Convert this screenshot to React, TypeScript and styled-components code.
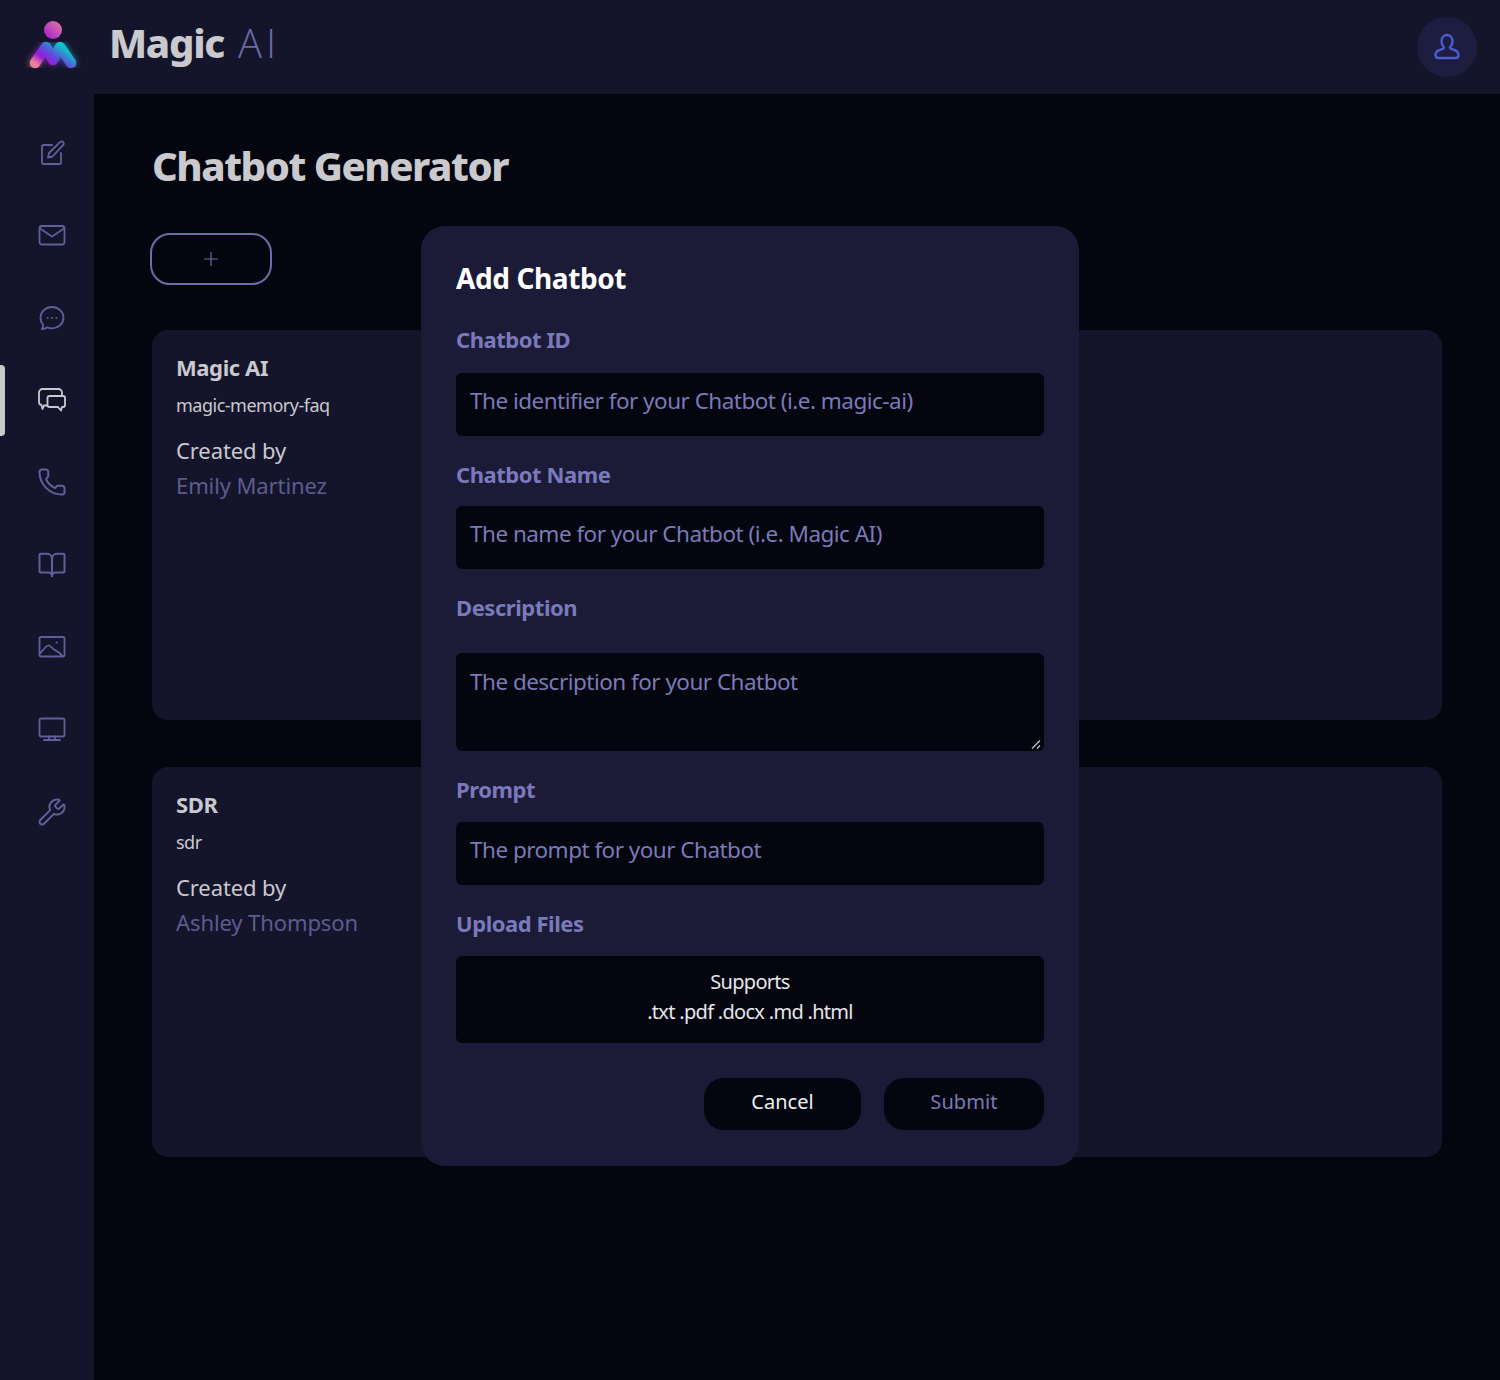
import React from "react";
import styled, { createGlobalStyle } from "styled-components";
import { Phone, BookOpen, Wrench, Plus } from "lucide-react";

const Global = createGlobalStyle`
  html, body { margin: 0; padding: 0; background: #05050f; }
  * { box-sizing: border-box; }
  body { font-family: "Noto Sans", "Open Sans", sans-serif; }
`;

const Page = styled.div`
  position: relative;
  width: 1500px;
  height: 1380px;
  background: #05050f;
  overflow: hidden;
  display: flex;
  flex-direction: column;
`;
const Header = styled.header`
  height: 94px;
  flex: none;
  background: #14152b;
  display: flex;
  align-items: center;
  padding: 0 23px 0 25px;
`;
const LogoBox = styled.div`
  width: 56px;
  height: 64px;
  margin-right: 28px;
  margin-top: -4px;
`;
const Brand = styled.div`
  font-size: 40px;
  line-height: 48px;
  font-weight: 800;
  color: #c9c9ce;
  letter-spacing: -1.3px;
  flex: 1;
  margin-top: -8px;
`;
const BrandLight = styled.span`
  font-family: "Open Sans", sans-serif;
  font-weight: 300;
  color: #6a6aa6;
  letter-spacing: 4px;
  margin-left: 14px;
`;
const Avatar = styled.div`
  width: 60px;
  height: 60px;
  border-radius: 50%;
  background: #1c1d3f;
  display: flex;
  align-items: center;
  justify-content: center;
  color: #4d5bd0;
`;
const Body = styled.div`
  flex: 1;
  display: flex;
`;
const Sidebar = styled.nav`
  width: 94px;
  flex: none;
  background: #14152b;
  padding: 18px 0 0 10px;
`;
const NavItem = styled.div<{ $active?: boolean }>`
  height: 82.33px;
  display: flex;
  align-items: center;
  justify-content: center;
  color: ${(p) => (p.$active ? "#c9c9ce" : "#5f5f9b")};
  ${(p) =>
    p.$active &&
    `&::before {
      content: "";
      position: absolute;
      left: 0;
      margin-top: 1px;
      width: 5px;
      height: 71px;
      background: #c9c9ce;
      border-radius: 0 4px 4px 0;
    }`}
`;
const Main = styled.main`
  flex: 1;
  padding: 45px 58px 0 58px;
`;
const Title = styled.h1`
  margin: 0 0 40px 0;
  font-size: 40px;
  line-height: 54px;
  font-weight: 800;
  letter-spacing: -1.45px;
  color: #c9c9ce;
`;
const AddButton = styled.button`
  width: 122px;
  height: 52px;
  margin: 0 0 45px -2px;
  display: flex;
  align-items: center;
  justify-content: center;
  background: transparent;
  border: 2px solid #6c6ca6;
  border-radius: 20px;
  color: #6c6ca6;
  padding: 0;
`;
const Cards = styled.div`
  display: flex;
  flex-direction: column;
  gap: 47.5px;
`;
const Card = styled.article`
  height: 389.5px;
  border-radius: 16px;
  background: #14152b;
  padding: 21px 24px;
`;
const CardName = styled.div`
  font-size: 22px;
  line-height: 32px;
  font-weight: 700;
  letter-spacing: -0.4px;
  color: #c9c9ce;
`;
const CardId = styled.div`
  font-size: 18px;
  line-height: 26px;
  margin-top: 9px;
  letter-spacing: -0.5px;
  color: #c9c9ce;
`;
const CreatedLabel = styled.div`
  font-size: 22px;
  line-height: 32px;
  margin-top: 16px;
  letter-spacing: -0.1px;
  color: #c9c9ce;
`;
const CreatedName = styled.div`
  font-size: 22px;
  line-height: 32px;
  margin-top: 3px;
  letter-spacing: -0.1px;
  color: #5c5c90;
`;
const Modal = styled.section`
  position: absolute;
  left: 421px;
  top: 226px;
  width: 658px;
  height: 940px;
  background: #1b1b38;
  border-radius: 24px;
  padding: 32px 35px 35px 35px;
  display: flex;
  flex-direction: column;
`;
const ModalTitle = styled.h2`
  margin: 0 0 28px;
  font-size: 28px;
  line-height: 40px;
  font-weight: 700;
  letter-spacing: -0.4px;
  color: #fff;
`;
const Field = styled.div`
  margin-bottom: 25px;
`;
const Label = styled.label<{ $gap?: number }>`
  display: block;
  font-size: 22px;
  line-height: 26px;
  font-weight: 700;
  letter-spacing: -0.45px;
  color: #7a7abb;
  margin-bottom: ${(p) => p.$gap ?? 20}px;
`;
const TextInput = styled.input`
  display: block;
  width: 100%;
  height: 63px;
  border: 0;
  border-radius: 6px;
  background: #05050f;
  padding: 0 14px 8px;
  font: 400 22.5px "Noto Sans", sans-serif;
  letter-spacing: -0.52px;
  color: #7a7ab8;
  outline: none;
  &::placeholder { color: #7a7ab8; opacity: 1; }
`;
const AreaWrap = styled.div`
  position: relative;
`;
const TextArea = styled.textarea`
  display: block;
  width: 100%;
  height: 98px;
  border: 0;
  border-radius: 6px;
  background: #05050f;
  padding: 14px;
  font: 400 22.5px/30px "Noto Sans", sans-serif;
  letter-spacing: -0.52px;
  color: #7a7ab8;
  outline: none;
  resize: none;
  &::placeholder { color: #7a7ab8; opacity: 1; }
`;
const Grip = styled.svg`
  position: absolute;
  right: 2px;
  bottom: 2px;
  pointer-events: none;
`;
const Upload = styled.div`
  height: 87px;
  border-radius: 6px;
  background: #05050f;
  padding-top: 11px;
  text-align: center;
  color: #e6e6ea;
  font-size: 20px;
  line-height: 30px;
  letter-spacing: -0.7px;
`;
const Actions = styled.div`
  display: flex;
  justify-content: flex-end;
  gap: 23px;
  margin-top: 10px;
`;
const ActionButton = styled.button<{ $w: number; $primary?: boolean }>`
  width: ${(p) => p.$w}px;
  height: 52px;
  border: 0;
  border-radius: 20px;
  background: #05050f;
  color: ${(p) => (p.$primary ? "#7a7ab8" : "#f0f0f4")};
  font: 400 20px "Noto Sans", sans-serif;
  letter-spacing: ${(p) => (p.$primary ? "0.1px" : "0")};
  padding: 0 0 6px;
`;

const Icon: React.FC<React.PropsWithChildren> = ({ children }) => (
  <svg width="28" height="28" viewBox="0 0 28 28" fill="none" stroke="currentColor" strokeWidth="1.8" strokeLinecap="round" strokeLinejoin="round">
    {children}
  </svg>
);

const Logo = () => (
  <svg width="56" height="64" viewBox="0 0 56 64">
    <defs>
      <linearGradient id="mg" x1="0" y1="1" x2="1" y2="0.4">
        <stop offset="0" stopColor="#e87f9a" />
        <stop offset="0.3" stopColor="#9a18d8" />
        <stop offset="0.6" stopColor="#5a50dc" />
        <stop offset="1" stopColor="#10c0c8" />
      </linearGradient>
      <linearGradient id="mc" x1="0" y1="1" x2="1" y2="0">
        <stop offset="0" stopColor="#9a18d8" />
        <stop offset="1" stopColor="#e87f9a" />
      </linearGradient>
      <filter id="gl" x="-30%" y="-30%" width="160%" height="160%">
        <feGaussianBlur stdDeviation="3" />
      </filter>
    </defs>
    <path d="M10 50 L21 34 L28 47 L35 34 L46 50" fill="none" stroke="url(#mg)" strokeWidth="11" strokeLinecap="round" strokeLinejoin="round" filter="url(#gl)" opacity="0.7" />
    <path d="M10 50 L21 34 L28 47 L35 34 L46 50" fill="none" stroke="url(#mg)" strokeWidth="10.5" strokeLinecap="round" strokeLinejoin="round" />
    <circle cx="28" cy="17" r="9" fill="url(#mc)" />
  </svg>
);

const items = [
  <Icon key="a">
    <path d="M14 6H5.5A1.5 1.5 0 0 0 4 7.500v16A1.500 1.500 0 0 0 5.500 25h16a1.500 1.500 0 0 0 1.500-1.500V14" />
    <path d="M10 18.500l1-4.500L22.500 2.700a2.200 2.200 0 0 1 3 3L14.500 17.500z" />
  </Icon>,
  <Icon key="b">
    <rect x="1.500" y="5" width="25" height="18.500" rx="2.500" />
    <path d="M2 7.500l12 8 12-8" />
  </Icon>,
  <Icon key="c">
    <path d="M14 3c6.400 0 11.500 4.800 11.500 10.700S20.400 24.300 14 24.300c-1.700 0-3.300-.3-4.800-.9-1.500 1-3.200 1.500-5.400 1.600 1-1.200 1.500-2.400 1.400-4C3.600 19.200 2.500 16.600 2.500 13.700 2.500 7.800 7.600 3 14 3z" />
    <path d="M9.500 13.800h.3M13.900 13.800h.3M18.300 13.800h.3" />
  </Icon>,
  <Icon key="d">
    <path d="M8.500 19.500H6l-1.500 3.500L3.500 19A3 3 0 0 1 1 16V6.500A3.500 3.500 0 0 1 4.500 3h16A3.500 3.500 0 0 1 24 6.500V10" />
    <path d="M12.500 10h12.500a2 2 0 0 1 2 2v7a2 2 0 0 1-2 2h-1l-1 3.500-3-3.500h-8.500a2 2 0 0 1-2-2v-7a2 2 0 0 1 2-2z" />
  </Icon>,
  <Phone key="e" size={30} strokeWidth={1.6} />,
  <BookOpen key="f" size={30} strokeWidth={1.6} />,
  <Icon key="g">
    <rect x="1.500" y="4" width="25" height="19.500" rx="1.500" />
    <path d="M2 20.500C5 17 8 13 10 12.500c2-.5 4 2.500 6 4 3 2 6 2.500 8 6.500" />
    <path d="M18.500 9.500h.3" />
  </Icon>,
  <Icon key="h">
    <rect x="1.500" y="3.500" width="25" height="18" rx="1.500" />
    <path d="M11 21.500v3M17 21.500v3M6 25h16" />
  </Icon>,
  <Wrench key="i" size={30} strokeWidth={1.6} />,
];

export default function App() {
  return (
    <Page>
      <Global />
      <Header>
        <LogoBox><Logo /></LogoBox>
        <Brand>Magic<BrandLight>AI</BrandLight></Brand>
        <Avatar>
          <svg width="30" height="30" viewBox="0 0 30 30" fill="none" stroke="currentColor" strokeWidth="2.400" strokeLinejoin="round">
            <path d="M15 3c3.300 0 5.500 2.500 5.500 6s-1.500 5.500-2.500 6.500c0 1 1 1.500 3 2 3 .8 5.500 2.800 5.500 5.500 0 2-1 3-3 3H6.500c-2 0-3-1-3-3 0-2.700 2.500-4.700 5.500-5.500 2-.5 3-1 3-2-1-1-2.500-3-2.500-6.500S11.700 3 15 3z" />
          </svg>
        </Avatar>
      </Header>
      <Body>
        <Sidebar>
          {items.map((icon, i) => (
            <NavItem key={i} $active={i === 3}>{icon}</NavItem>
          ))}
        </Sidebar>
        <Main>
          <Title>Chatbot Generator</Title>
          <AddButton aria-label="Add"><Plus size={22} strokeWidth={1.3} /></AddButton>
          <Cards>
            <Card>
              <CardName>Magic AI</CardName>
              <CardId>magic-memory-faq</CardId>
              <CreatedLabel>Created by</CreatedLabel>
              <CreatedName>Emily Martinez</CreatedName>
            </Card>
            <Card>
              <CardName>SDR</CardName>
              <CardId>sdr</CardId>
              <CreatedLabel>Created by</CreatedLabel>
              <CreatedName>Ashley Thompson</CreatedName>
            </Card>
          </Cards>
        </Main>
      </Body>
      <Modal>
        <ModalTitle>Add Chatbot</ModalTitle>
        <Field>
          <Label $gap={21}>Chatbot ID</Label>
          <TextInput placeholder="The identifier for your Chatbot (i.e. magic-ai)" />
        </Field>
        <Field>
          <Label $gap={19}>Chatbot Name</Label>
          <TextInput placeholder="The name for your Chatbot (i.e. Magic AI)" />
        </Field>
        <Field>
          <Label $gap={33}>Description</Label>
          <AreaWrap>
            <TextArea placeholder="The description for your Chatbot" />
            <Grip width="12" height="10" viewBox="0 0 12 10" stroke="#c4c4c8" strokeWidth="1.300">
              <path d="M2 9.500L10 1.500M7 9.500L10 6.500" />
            </Grip>
          </AreaWrap>
        </Field>
        <Field>
          <Label>Prompt</Label>
          <TextInput placeholder="The prompt for your Chatbot" />
        </Field>
        <Field>
          <Label>Upload Files</Label>
          <Upload>Supports<br />.txt .pdf .docx .md .html</Upload>
        </Field>
        <Actions>
          <ActionButton $w={157}>Cancel</ActionButton>
          <ActionButton $w={160} $primary>Submit</ActionButton>
        </Actions>
      </Modal>
    </Page>
  );
}
